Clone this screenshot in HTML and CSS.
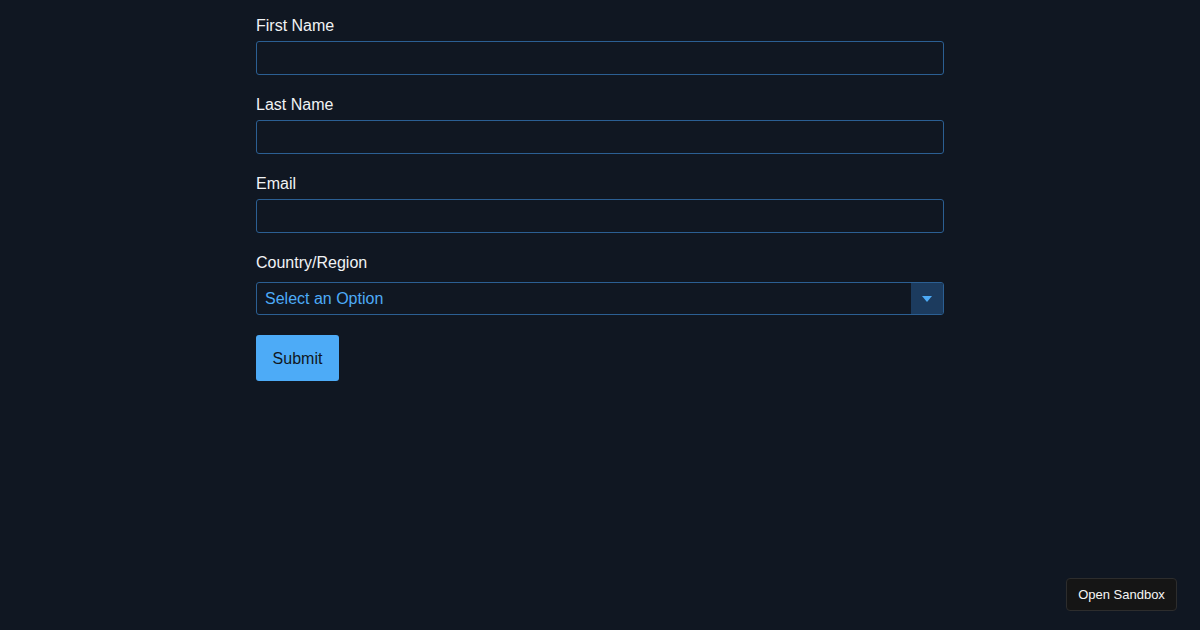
FILE: index.html
```html
<!DOCTYPE html>
<html lang="en">
<head>
<meta charset="utf-8">
<title>Form</title>
<link rel="stylesheet" href="styles.css">
</head>
<body>
<form class="form">
  <div class="field">
    <label class="label" for="fn">First Name</label>
    <input class="input" id="fn" type="text">
  </div>
  <div class="field">
    <label class="label" for="ln">Last Name</label>
    <input class="input" id="ln" type="text">
  </div>
  <div class="field">
    <label class="label" for="em">Email</label>
    <input class="input" id="em" type="email">
  </div>
  <div class="field field-select">
    <label class="label">Country/Region</label>
    <div class="select">
      <span class="select-text">Select an Option</span>
      <span class="select-arrow"><svg width="10" height="6" viewBox="0 0 10 6"><path d="M0 0h10L5 6z" fill="#4dabf7"/></svg></span>
    </div>
  </div>
  <button class="submit" type="button">Submit</button>
</form>
<button class="sandbox" type="button">Open Sandbox</button>
</body>
</html>
```
FILE: styles.css
```css
html, body {
  margin: 0;
  padding: 0;
  background: #101722;
  font-family: "Liberation Sans", Arial, sans-serif;
  height: 100%;
}
.form {
  width: 688px;
  margin: 0 0 0 256px;
  padding-top: 13px;
  display: flex;
  flex-direction: column;
}
.field {
  display: flex;
  flex-direction: column;
  margin-bottom: 17px;
}
.label {
  color: #f1f3f5;
  font-size: 16px;
  line-height: 24px;
  padding-top: 1px;
  margin-bottom: 3px;
}
.input {
  box-sizing: border-box;
  height: 34px;
  width: 100%;
  margin: 0;
  background: #101722;
  border: 1px solid #2b5f93;
  border-radius: 3px;
  color: #f1f3f5;
  font: 16px "Liberation Sans", Arial, sans-serif;
  padding: 0 8px;
  outline: none;
}
.field-select .label {
  margin-bottom: 7px;
}
.field-select {
  margin-bottom: 20px;
}
.select {
  box-sizing: border-box;
  height: 33px;
  display: flex;
  align-items: stretch;
  border: 1px solid #2b5f93;
  border-radius: 3px;
  overflow: hidden;
}
.select-text {
  flex: 1;
  display: flex;
  align-items: center;
  padding-left: 8px;
  color: #4dabf7;
  font-size: 16px;
}
.select-arrow {
  width: 32px;
  background: #1c3b5e;
  display: flex;
  align-items: center;
  justify-content: center;
}
.submit {
  align-self: flex-start;
  width: 83px;
  height: 46px;
  background: #4dabf7;
  color: #101722;
  border: none;
  border-radius: 3px;
  font: 16px "Liberation Sans", Arial, sans-serif;
  padding: 2px 0 0;
  cursor: pointer;
}
.sandbox {
  position: fixed;
  right: 23px;
  bottom: 19px;
  width: 111px;
  height: 33px;
  background: #151515;
  color: #f5f5f5;
  border: 1px solid #2d2d2d;
  border-radius: 4px;
  font: 13px "Liberation Sans", Arial, sans-serif;
  padding: 0;
}
```
